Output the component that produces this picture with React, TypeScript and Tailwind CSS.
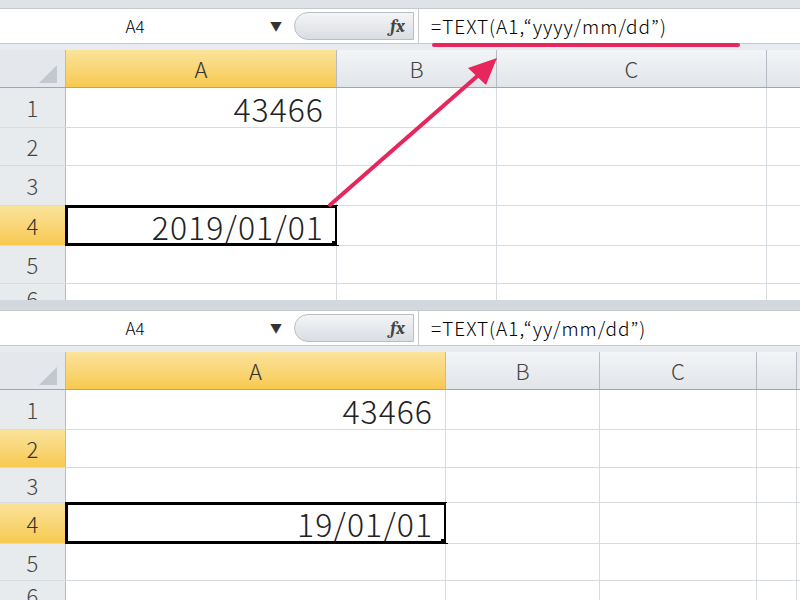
const F = { fontFamily: '"Noto Sans CJK JP", "DejaVu Sans", sans-serif' };

function Sheet({ cols, rowH, formula, rows, selRow2 }: { cols: number[]; rowH: number[]; formula: string; rows: Record<number, string>; selRow2?: boolean }) {
  const labels = ["A", "B", "C", ""];
  return (
    <div className="bg-[#dfe3e8]" style={F}>
      <div className="flex h-[36px] items-center border-y border-[#c5cad1] bg-white">
        <div className="flex w-[270px] items-center justify-center text-[17px] font-light text-black">A4</div>
        <div className="text-[12px] text-[#333]">▼</div>
        <div className="ml-3 flex h-[28px] w-[120px] items-center justify-end rounded-l-full border border-[#b9bec5] bg-gradient-to-b from-[#f4f5f7] to-[#d9dde2] pr-2">
          <span className="font-serif text-[18px] font-bold italic text-[#444]">fx</span>
        </div>
        <div className="ml-1 flex h-full flex-1 items-center border-l border-[#c5cad1] pl-3 text-[19px] font-light tracking-[1px] text-black">{formula}</div>
      </div>
      <div className="h-[6px] bg-[#e8ebef]" />
      <div className="flex h-[38px] border-b border-[#9ea6b0]">
        <div className="relative w-[66px] shrink-0 border-r border-[#b5bcc5] bg-[#e4e8ec]">
          <div className="absolute bottom-1 right-2 h-0 w-0 border-b-[18px] border-l-[18px] border-b-[#c3c8ce] border-l-transparent" />
        </div>
        {cols.map((w, i) => (
          <div key={i} style={{ width: w }} className={`flex shrink-0 items-center justify-center border-r border-[#b5bcc5] text-[22px] font-light ${i === 0 ? "bg-gradient-to-b from-[#fbe39a] to-[#f7c94d] text-[#333]" : "bg-gradient-to-b from-[#f3f5f7] to-[#e1e5e9] text-[#444]"}`}>{labels[i]}</div>
        ))}
        <div className="flex-1 bg-[#e8ebee]" />
      </div>
      {rowH.map((h, r) => {
        const n = r + 1;
        const sel = n === 4;
        const hl = sel || (selRow2 && n === 2);
        return (
          <div key={r} style={{ height: h }} className="flex border-b border-[#d6dbe0]">
            <div className={`flex w-[66px] shrink-0 items-center justify-center border-r border-[#b5bcc5] text-[22px] font-light ${hl ? "bg-gradient-to-b from-[#fbe39a] to-[#f7c94d] text-[#333]" : "bg-[#e8ebee] text-[#444]"}`}>{n}</div>
            {cols.map((w, i) => (
              <div key={i} style={{ width: w }} className={`relative flex shrink-0 items-center justify-end border-r border-[#d6dbe0] bg-white pr-3 text-[32px] font-light tracking-[1px] text-[#222] ${sel && i === 0 ? "outline outline-[3px] -outline-offset-2 outline-black" : ""}`}>
                {i === 0 ? rows[n] : ""}
                {sel && i === 0 && <div className="absolute -bottom-[3px] -right-[3px] h-[7px] w-[7px] bg-black" />}
              </div>
            ))}
            <div className="flex-1 bg-white" />
          </div>
        );
      })}
    </div>
  );
}

export default function App() {
  return (
    <div className="relative h-[600px] w-[800px] overflow-hidden bg-[#dfe3e8]">
      <div className="h-[8px] bg-[#dfe3e8]" />
      <div className="h-[292px] overflow-hidden">
        <Sheet cols={[271, 160, 270, 40]} rowH={[40, 38, 40, 40, 38, 30]} formula={'=TEXT(A1,“yyyy/mm/dd”)'} rows={{ 1: "43466", 4: "2019/01/01" }} />
      </div>
      <div className="h-[10px] bg-[#d3d8de]" />
      <div className="h-[290px] overflow-hidden">
        <Sheet cols={[380, 154, 157, 40]} rowH={[40, 38, 35, 41, 37, 30]} formula={'=TEXT(A1,“yy/mm/dd”)'} rows={{ 1: "43466", 4: "19/01/01" }} selRow2 />
      </div>
      <svg className="absolute left-0 top-0" width="800" height="300">
        <line x1="434" y1="45" x2="738" y2="45" stroke="#e8265e" strokeWidth="4" strokeLinecap="round" />
        <line x1="330" y1="205" x2="482" y2="72" stroke="#e8265e" strokeWidth="4" strokeLinecap="round" />
        <polygon points="497,58 468,68 486,85" fill="#e8265e" />
      </svg>
    </div>
  );
}
